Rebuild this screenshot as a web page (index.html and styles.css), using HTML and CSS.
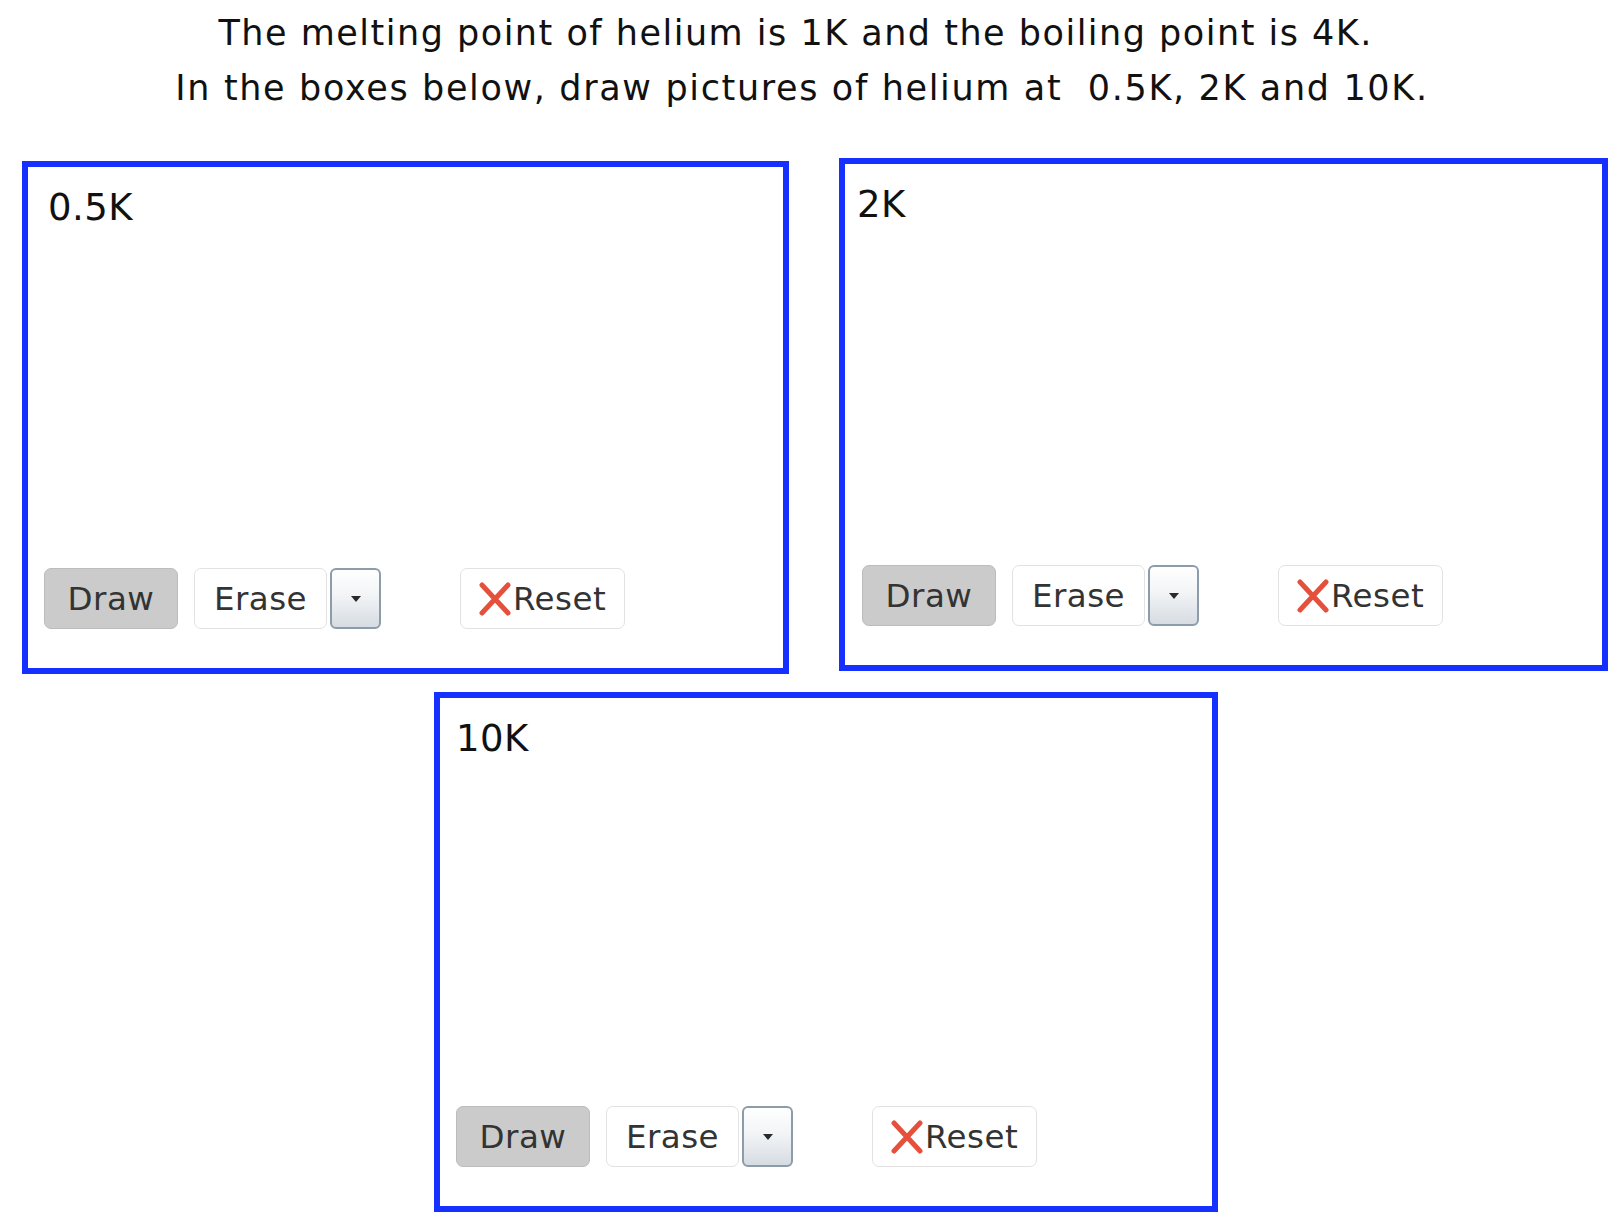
FILE: index.html
```html
<!DOCTYPE html>
<html lang="en">
<head>
<meta charset="utf-8">
<title>Helium states</title>
<link rel="stylesheet" href="styles.css">
</head>
<body>
<header class="prompt">
  <p class="prompt-line prompt-line--first">The melting point of helium is 1K and the boiling point is 4K. </p>
  <p class="prompt-line prompt-line--second">In the boxes below, draw pictures of helium at  0.5K, 2K and 10K.</p>
</header>

<main class="boards">
  <div class="board-row board-row--top">
    <section class="board board--a">
      <h2 class="board-label board-label--a">0.5K</h2>
      <div class="toolbar">
        <button class="tool tool--draw">Draw</button>
        <div class="erase-group">
          <button class="tool tool--erase">Erase</button>
          <button class="tool tool--menu" aria-label="Eraser options"><span class="caret"></span></button>
        </div>
        <button class="tool tool--reset"><svg class="reset-x" viewBox="0 0 36 34" aria-hidden="true"><path d="M5 3 L31 31 M31 3 L5 31" /></svg>Reset</button>
      </div>
    </section>
    <section class="board board--b">
      <h2 class="board-label board-label--b">2K</h2>
      <div class="toolbar">
        <button class="tool tool--draw">Draw</button>
        <div class="erase-group">
          <button class="tool tool--erase">Erase</button>
          <button class="tool tool--menu" aria-label="Eraser options"><span class="caret"></span></button>
        </div>
        <button class="tool tool--reset"><svg class="reset-x" viewBox="0 0 36 34" aria-hidden="true"><path d="M5 3 L31 31 M31 3 L5 31" /></svg>Reset</button>
      </div>
    </section>
  </div>
  <div class="board-row board-row--bottom">
    <section class="board board--c">
      <h2 class="board-label board-label--c">10K</h2>
      <div class="toolbar">
        <button class="tool tool--draw">Draw</button>
        <div class="erase-group">
          <button class="tool tool--erase">Erase</button>
          <button class="tool tool--menu" aria-label="Eraser options"><span class="caret"></span></button>
        </div>
        <button class="tool tool--reset"><svg class="reset-x" viewBox="0 0 36 34" aria-hidden="true"><path d="M5 3 L31 31 M31 3 L5 31" /></svg>Reset</button>
      </div>
    </section>
  </div>
</main>
</body>
</html>
```

FILE: styles.css
```css
* { box-sizing: border-box; }

html, body {
  margin: 0;
  padding: 0;
  background: #ffffff;
}

body {
  font-family: "DejaVu Sans", Verdana, sans-serif;
  color: #111111;
}

.prompt {
  padding-top: 6px;
  padding-right: 20px;
  text-align: center;
}

.prompt-line {
  margin: 0;
  font-size: 35px;
  letter-spacing: 1.5px;
  line-height: 55px;
  white-space: pre;
}

.prompt-line--second {
  letter-spacing: 1.65px;
}

.boards {
  display: flex;
  flex-direction: column;
}

.board-row {
  display: flex;
  align-items: flex-start;
}

.board-row--top {
  margin-top: 42px;
  padding-left: 22px;
  gap: 50px;
}

.board-row--bottom {
  margin-top: 18px;
  padding-left: 434px;
}

.board {
  display: flex;
  flex-direction: column;
  justify-content: space-between;
  border: 6px solid #1530ff;
  background: #ffffff;
  padding: 19px 0 39px 16px;
}

.board--a { width: 767px; height: 513px; margin-top: 3px; }
.board--b { width: 769px; height: 513px; }
.board--c { width: 784px; height: 520px; }

.board-label {
  margin: 0;
  font-size: 37px;
  font-weight: normal;
  line-height: 43px;
  letter-spacing: 0.5px;
  color: #111111;
}

.board-label--a { padding-left: 4px; }
.board-label--b { padding-left: 0; margin-left: -4px; }
.board-label--c { padding-left: 0; }

.toolbar {
  display: flex;
  align-items: center;
  gap: 16px;
}

.board--b .toolbar { margin-left: 1px; }

.erase-group {
  display: flex;
  gap: 3px;
  margin-right: 63px;
}

.tool {
  height: 61px;
  font-family: "DejaVu Sans", Verdana, sans-serif;
  font-size: 32.5px;
  letter-spacing: 0.5px;
  color: #333333;
  border-radius: 7px;
  padding: 0;
  margin: 0;
  display: flex;
  align-items: center;
  justify-content: center;
  cursor: pointer;
}

.tool--draw {
  width: 134px;
  background: #cbcbcb;
  border: 1px solid #bcbcbc;
}

.tool--erase {
  width: 133px;
  background: #ffffff;
  border: 1px solid #e2e2e2;
}

.tool--menu {
  width: 51px;
  border: 2px solid #8d9cab;
  border-radius: 6px;
  background: linear-gradient(#ffffff, #f2f4f6 45%, #d6dce2);
}

.caret {
  width: 0;
  height: 0;
  border-left: 5px solid transparent;
  border-right: 5px solid transparent;
  border-top: 6px solid #2a2a2a;
}

.tool--reset {
  width: 165px;
  background: #ffffff;
  border: 1px solid #e2e2e2;
  justify-content: flex-start;
  padding-left: 16px;
}

.reset-x {
  width: 36px;
  height: 34px;
  flex: none;
}

.reset-x path {
  fill: none;
  stroke: #e5503c;
  stroke-width: 5;
  stroke-linecap: round;
}
```
